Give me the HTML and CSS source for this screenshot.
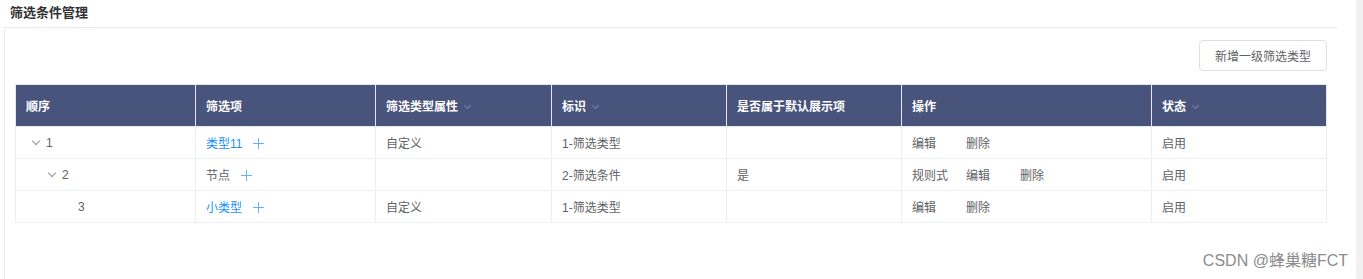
FILE: index.html
```html
<!DOCTYPE html>
<html lang="zh-CN">
<head>
  <meta charset="UTF-8" />
  <title>筛选条件管理</title>
  <link rel="stylesheet" href="styles.css">
</head>
<body>
  <div class="panel">
    <div class="panel-title">筛选条件管理</div>
    <div class="panel-body">
      <div class="toolbar">
        <button class="btn">新增一级筛选类型</button>
      </div>

      <table class="grid">
        <colgroup>
          <col style="width:180px">
          <col style="width:180px">
          <col style="width:176px">
          <col style="width:175px">
          <col style="width:175px">
          <col style="width:250px">
          <col style="width:175px">
        </colgroup>
        <thead>
          <tr>
            <th>顺序</th>
            <th>筛选项</th>
            <th>筛选类型属性 <span class="sort"></span></th>
            <th>标识 <span class="sort"></span></th>
            <th>是否属于默认展示项</th>
            <th>操作</th>
            <th>状态 <span class="sort"></span></th>
          </tr>
        </thead>
        <tbody>
          <tr>
            <td><span class="indent lv0"></span><span class="expand open"></span>1</td>
            <td><a class="link">类型11</a><svg class="plus" viewBox="0 0 10 10" shape-rendering="crispEdges"><path d="M0 5H10M5 0V10"/></svg></td>
            <td>自定义</td>
            <td>1-筛选类型</td>
            <td></td>
            <td><span class="op">编辑</span><span class="op">删除</span></td>
            <td>启用</td>
          </tr>
          <tr>
            <td><span class="indent lv1"></span><span class="expand open"></span>2</td>
            <td>节点<svg class="plus" viewBox="0 0 10 10" shape-rendering="crispEdges"><path d="M0 5H10M5 0V10"/></svg></td>
            <td></td>
            <td>2-筛选条件</td>
            <td>是</td>
            <td><span class="op">规则式</span><span class="op">编辑</span><span class="op">删除</span></td>
            <td>启用</td>
          </tr>
          <tr>
            <td><span class="indent lv2"></span><span class="expand"></span>3</td>
            <td><a class="link">小类型</a><svg class="plus" viewBox="0 0 10 10" shape-rendering="crispEdges"><path d="M0 5H10M5 0V10"/></svg></td>
            <td>自定义</td>
            <td>1-筛选类型</td>
            <td></td>
            <td><span class="op">编辑</span><span class="op">删除</span></td>
            <td>启用</td>
          </tr>
        </tbody>
      </table>
    </div>
  </div>

  <div class="scroll-strip"></div>

  <div class="watermark">CSDN @蜂巢糖FCT</div>
</body>
</html>
```

FILE: styles.css
```css
html, body {
  height: 100%;
}

body {
  margin: 0;
  display: flex;
  background: #fff;
  font-family: "Liberation Sans", "Noto Sans CJK SC", sans-serif;
  font-size: 12px;
  color: #606266;
  overflow: hidden;
}

.panel {
  margin-left: 4px;
  width: 1333px;
  display: flex;
  flex-direction: column;
}

.panel-title {
  height: 27px;
  line-height: 26px;
  padding-left: 6px;
  border-bottom: 1px solid #e8e8e8;
  font-size: 13px;
  font-weight: bold;
  color: #303133;
}

.panel-body {
  flex: 1;
  border-left: 1px solid #ebebeb;
  padding: 12px 10px 0 10px;
}

.toolbar {
  display: flex;
  justify-content: flex-end;
  margin-bottom: 13px;
}

.btn {
  height: 31px;
  padding: 0 15px;
  border: 1px solid #dcdfe6;
  border-radius: 4px;
  background: #fff;
  color: #606266;
  font-family: inherit;
  font-size: 12px;
}

.grid {
  width: 1311px;
  table-layout: fixed;
  border-collapse: collapse;
}

.grid th,
.grid td {
  border: 1px solid #ebeef5;
  padding: 0 10px;
  text-align: left;
  white-space: nowrap;
}

.grid th {
  height: 41px;
  background: #48547c;
  color: #fff;
  font-weight: bold;
  border-color: #e4e7ef;
}

.grid td {
  height: 31px;
}

.sort {
  display: inline-block;
  width: 4px;
  height: 4px;
  margin-left: 4px;
  border-right: 1px solid #7c85a6;
  border-bottom: 1px solid #7c85a6;
  transform: rotate(45deg);
  position: relative;
  top: -3px;
}

.indent {
  display: inline-block;
}
.lv0 { width: 0; }
.lv1 { width: 16px; }
.lv2 { width: 32px; }

.expand {
  display: inline-block;
  width: 20px;
  height: 10px;
  vertical-align: middle;
  position: relative;
}

.expand.open::before {
  content: "";
  position: absolute;
  left: 7px;
  top: 0;
  width: 5px;
  height: 5px;
  border-right: 1px solid #909399;
  border-bottom: 1px solid #909399;
  transform: rotate(45deg);
}

.link {
  color: #1890ff;
  cursor: pointer;
}

.plus {
  width: 11px;
  height: 11px;
  margin-left: 11px;
  vertical-align: -1px;
  fill: none;
  stroke: #66b1ff;
  stroke-width: 1;
}

.op {
  display: inline-block;
  width: 54px;
  cursor: pointer;
}

.scroll-strip {
  margin-left: auto;
  width: 7px;
  background: #f1f1f1;
}

.watermark {
  position: absolute;
  right: 15px;
  bottom: 8px;
  font-size: 16px;
  color: #8c8c8c;
}
```
